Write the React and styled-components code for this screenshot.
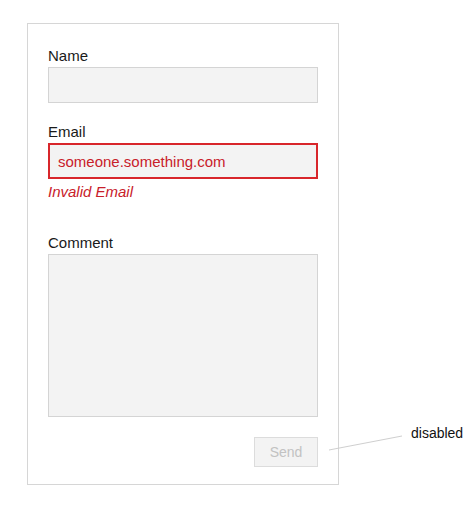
import React from 'react';
import styled, { createGlobalStyle } from 'styled-components';

const Global = createGlobalStyle`
    body {
        margin: 0;
        background: #fff;
        font-family: "Liberation Sans", Arial, sans-serif;
    }
`;

const Page = styled.div`
    position: relative;
    width: 474px;
    height: 520px;
    padding: 23px 0 0 27px;
    box-sizing: border-box;
`;

const Card = styled.form`
    width: 312px;
    height: 462px;
    box-sizing: border-box;
    border: 1px solid #d6d6d6;
    padding: 23px 20px 0 20px;
    display: flex;
    flex-direction: column;
`;

const Label = styled.label`
    font-size: 15px;
    color: #1a1a1a;
    line-height: 17px;
    margin-top: ${(p) => p.top || 0}px;
    margin-bottom: 3px;
`;

const Input = styled.input`
    height: 36px;
    box-sizing: border-box;
    width: 100%;
    background: #f3f3f3;
    border: ${(p) => (p.invalid ? '2px solid #d8262b' : '1px solid #d4d4d4')};
    color: #c8202a;
    font-family: "Liberation Sans", Arial, sans-serif;
    font-size: 15px;
    padding: 0 8px;
    outline: none;
`;

const Error = styled.div`
    font-size: 15px;
    font-style: italic;
    color: #c8202a;
    margin-top: 4px;
    line-height: 17px;
`;

const TextArea = styled.textarea`
    height: 163px;
    box-sizing: border-box;
    width: 100%;
    background: #f3f3f3;
    border: 1px solid #d4d4d4;
    resize: none;
    outline: none;
`;

const Actions = styled.div`
    display: flex;
    justify-content: flex-end;
    margin-top: 20px;
`;

const Button = styled.button`
    width: 64px;
    height: 30px;
    background: #f3f3f3;
    border: 1px solid #dcdcdc;
    color: #c2c2c2;
    font-family: "Liberation Sans", Arial, sans-serif;
    font-size: 14px;
    padding: 0;
`;

const Note = styled.div`
    position: absolute;
    left: 411px;
    top: 425px;
    font-size: 14px;
    color: #111;
`;

const Leader = styled.svg`
    position: absolute;
    left: 0;
    top: 0;
    pointer-events: none;
`;

const App = () => {
    return (
        <Page>
            <Global />
            <Card>
                <Label>Name</Label>
                <Input type="text" />
                <Label top={20}>Email</Label>
                <Input type="text" invalid defaultValue="someone.something.com" />
                <Error>Invalid Email</Error>
                <Label top={34}>Comment</Label>
                <TextArea />
                <Actions>
                    <Button type="button" disabled>Send</Button>
                </Actions>
            </Card>
            <Leader width="474" height="520">
                <line x1="329" y1="450" x2="402" y2="436" stroke="#cfcfcf" strokeWidth="1" />
            </Leader>
            <Note>disabled</Note>
        </Page>
    );
};

export default App;
